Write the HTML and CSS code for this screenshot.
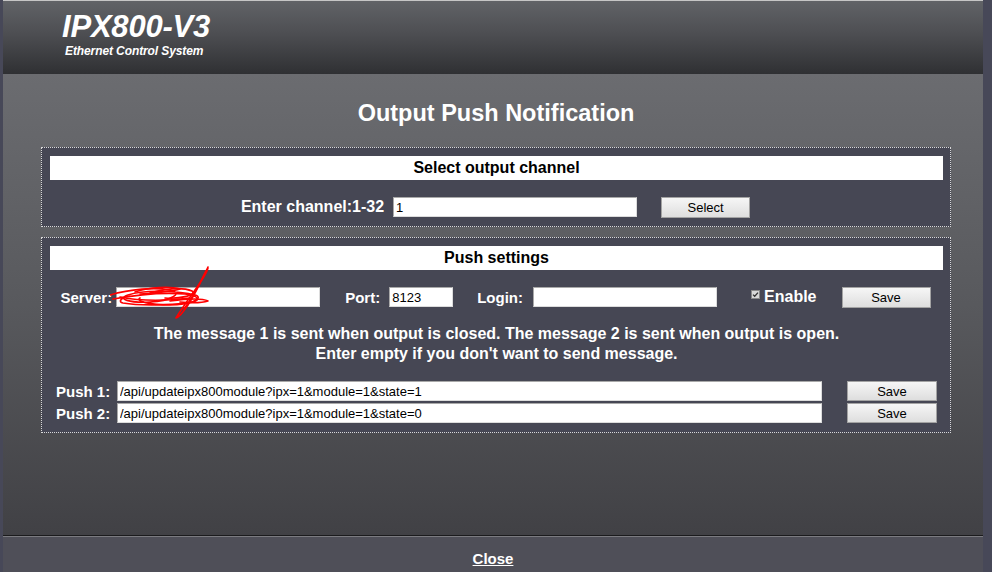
FILE: index.html
```html
<!DOCTYPE html>
<html>
<head>
<meta charset="utf-8">
<title>Output Push Notification</title>
<link rel="stylesheet" href="styles.css">
</head>
<body>
<div class="modal">
  <header class="head">
    <div class="brand">IPX800-V3</div>
    <div class="tagline">Ethernet Control System</div>
  </header>
  <main class="content">
    <h1 class="title">Output Push Notification</h1>
    <section class="box box-channel">
      <div class="box-head">Select output channel</div>
      <div class="row-channel">
        <span class="lbl lbl-big">Enter channel:1-32</span>
        <input class="field f-channel" type="text" value="1">
        <button class="btn btn-select">Select</button>
      </div>
    </section>
    <section class="box box-push">
      <div class="box-head">Push settings</div>
      <div class="row-server">
        <span class="lbl">Server:</span>
        <span class="server-wrap">
          <input class="field f-server" type="text" value="">
          <svg class="scribble" width="110" height="56" viewBox="0 0 110 56">
            <g fill="none" stroke="#ff0000" stroke-width="1.6" stroke-linecap="round" stroke-linejoin="round">
              <path d="M0 30 C20 24 45 22 60 25 C75 28 60 36 40 37 C20 38 6 34 18 30 C35 24 70 26 85 30 C95 33 80 40 60 40 C40 40 25 36 30 33"/>
              <path d="M3 34 C25 30 50 27 75 29 C90 31 92 36 78 38 C60 40 30 41 13 38 C8 37 10 33 20 31"/>
              <path d="M98 2 C92 14 86 28 78 40 C74 46 70 52 66 53 C70 46 80 32 90 18 C95 10 99 4 98 2"/>
              <path d="M96 6 C90 18 84 30 74 44"/>
              <path d="M40 28 C55 24 72 22 82 26 C88 30 70 34 55 33"/>
              <path d="M60 36 C75 34 92 33 98 36 C92 38 80 38 70 37"/>
              <path d="M25 27 C40 22 60 21 70 24 C60 27 45 28 30 29"/>
              <path d="M10 32 C30 36 55 36 80 33"/>
            </g>
          </svg>
        </span>
        <span class="lbl lbl-port">Port:</span>
        <input class="field f-port" type="text" value="8123">
        <span class="lbl lbl-login">Login:</span>
        <input class="field f-login" type="text" value="">
        <span class="check">
          <svg width="9" height="9" viewBox="0 0 9 9"><rect x="0.5" y="0.5" width="8" height="8" fill="#d9d9d9" stroke="#8a8a8a"/><path d="M2 4.6 L3.7 6.3 L7 2.6" fill="none" stroke="#333" stroke-width="1.3"/></svg>
        </span>
        <span class="lbl lbl-enable">Enable</span>
        <button class="btn btn-save1">Save</button>
      </div>
      <p class="msg">The message 1 is sent when output is closed. The message 2 is sent when output is open.<br>Enter empty if you don't want to send message.</p>
      <div class="push-grid">
        <span class="lbl">Push 1:</span>
        <input class="field f-push" type="text" value="/api/updateipx800module?ipx=1&amp;module=1&amp;state=1">
        <button class="btn">Save</button>
        <span class="lbl">Push 2:</span>
        <input class="field f-push" type="text" value="/api/updateipx800module?ipx=1&amp;module=1&amp;state=0">
        <button class="btn">Save</button>
      </div>
    </section>
  </main>
  <footer class="foot">
    <a class="close" href="#">Close</a>
  </footer>
</div>
</body>
</html>
```

FILE: styles.css
```css
html, body {
  margin: 0;
  padding: 0;
}
body {
  background: #474858;
  width: 992px;
  height: 572px;
  overflow: hidden;
  font-family: "Liberation Sans", Arial, sans-serif;
  color: #fff;
}
.modal {
  width: 980px;
  height: 571px;
  margin-left: 3px;
  border-top: 1px solid #c6c6c6;
  display: flex;
  flex-direction: column;
}
.head {
  height: 73px;
  flex: none;
  background: linear-gradient(#616367, #4d4e52 45%, #2f3033);
  padding-left: 59px;
  box-sizing: border-box;
  padding-top: 10px;
}
.brand {
  font-size: 31px;
  font-weight: bold;
  font-style: italic;
  line-height: 32px;
  letter-spacing: -0.2px;
}
.tagline {
  font-size: 12px;
  font-weight: bold;
  font-style: italic;
  line-height: 13px;
  margin-left: 3px;
  margin-top: 2px;
  letter-spacing: -0.1px;
}
.content {
  flex: 1;
  background: linear-gradient(#6b6c70, #58595d 50%, #414145);
  padding-top: 25px;
}
.title {
  margin: 0 0 20px 0;
  padding-left: 6px;
  font-size: 23.5px;
  line-height: 28px;
  text-align: center;
  font-weight: bold;
}
.box {
  margin: 0 32px 0 38px;
  border: 1px dotted #d8d8d8;
  background: #464754;
  padding: 8px 7px 9px 8px;
}
.box-push {
  margin-top: 10px;
}
.box-head {
  background: #fff;
  color: #000;
  height: 24px;
  line-height: 24px;
  text-align: center;
  font-weight: bold;
  font-size: 16px;
}
.lbl {
  font-weight: bold;
  font-size: 15px;
  white-space: nowrap;
}
.lbl-big {
  font-size: 16px;
}
.field {
  height: 20px;
  box-sizing: border-box;
  border: 1px solid #a9a9a9;
  border-right-color: #dcdcdc;
  border-bottom-color: #dcdcdc;
  background: #fff;
  font-family: "Liberation Sans", Arial, sans-serif;
  font-size: 13px;
  color: #000;
  padding: 1px 2px;
  margin: 0;
  outline: none;
}
.btn {
  height: 21px;
  box-sizing: border-box;
  border: 1px solid #a3a3a3;
  background: linear-gradient(#f6f6f6, #dedede);
  font-family: "Liberation Sans", Arial, sans-serif;
  font-size: 13px;
  color: #000;
  padding: 0;
  margin: 0;
}
.row-channel {
  display: flex;
  align-items: center;
  justify-content: center;
  margin-top: 17px;
  height: 20px;
  padding-right: 2px;
}
.f-channel {
  width: 244px;
  margin-left: 9px;
}
.btn-select {
  width: 89px;
  margin-left: 24px;
}
.row-server {
  display: flex;
  align-items: center;
  justify-content: center;
  margin-top: 17px;
  height: 20px;
  padding-right: 2px;
}
.server-wrap {
  position: relative;
  margin-left: 4px;
  display: flex;
}
.f-server {
  width: 204px;
}
.scribble {
  position: absolute;
  left: -6px;
  top: -22px;
}
.lbl-port {
  margin-left: 25px;
}
.f-port {
  width: 64px;
  margin-left: 9px;
}
.lbl-login {
  margin-left: 24px;
}
.f-login {
  width: 184px;
  margin-left: 10px;
}
.check {
  margin-left: 34px;
  display: flex;
  margin-top: -5px;
}
.lbl-enable {
  font-size: 16px;
  margin-left: 4px;
}
.btn-save1 {
  width: 89px;
  margin-left: 25px;
}
.msg {
  margin: 17px 0 0 0;
  text-align: center;
  font-weight: bold;
  font-size: 16px;
  line-height: 20px;
}
.push-grid {
  display: grid;
  grid-template-columns: 61px 705px 90px;
  column-gap: 0;
  row-gap: 2px;
  align-items: center;
  margin-top: 17px;
  padding-left: 6px;
}
.push-grid .btn {
  width: 90px;
  margin-left: 25px;
  height: 20px;
}
.f-push {
  width: 705px;
}
.foot {
  flex: none;
  height: 37px;
  box-sizing: border-box;
  border-top: 1px solid #1b1b1d;
  box-shadow: inset 0 1px 0 #7b7b80;
  background: #4f4f58;
  text-align: center;
  padding-top: 14px;
}
.close {
  color: #fff;
  font-weight: bold;
  font-size: 15px;
  text-decoration: underline;
}
```
